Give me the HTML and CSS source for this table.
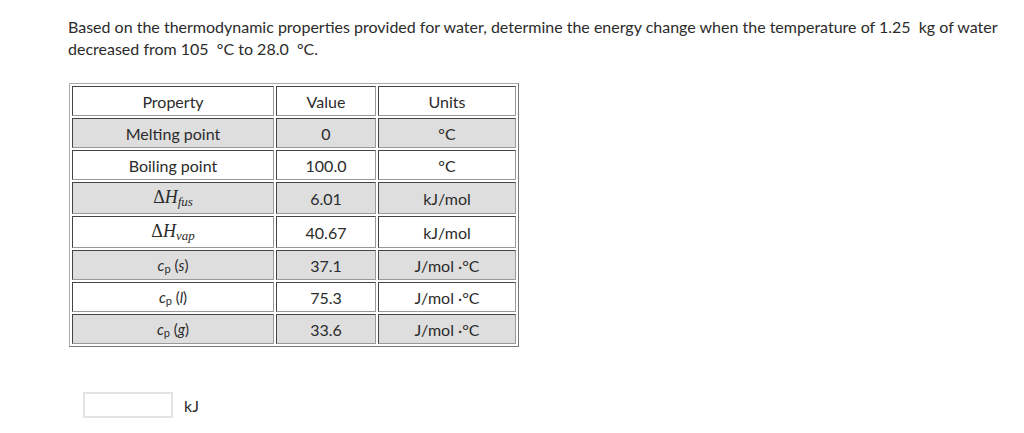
FILE: index.html
```html
<!DOCTYPE html>
<html>
<head>
<meta charset="utf-8">
<link rel="stylesheet" href="styles.css">
</head>
<body>
<div class="page">
  <p class="question">Based on the thermodynamic properties provided for water, determine the energy change when the temperature of 1.25&nbsp; kg of water decreased from 105&nbsp; °C to 28.0&nbsp; °C.</p>
  <table class="props">
    <tr><td class="c1">Property</td><td class="c2">Value</td><td class="c3">Units</td></tr>
    <tr class="alt"><td>Melting point</td><td>0</td><td>°C</td></tr>
    <tr><td>Boiling point</td><td>100.0</td><td>°C</td></tr>
    <tr class="alt tall"><td><span class="math">Δ<i>H</i><sub><i>fus</i></sub></span></td><td>6.01</td><td>kJ/mol</td></tr>
    <tr class="tall"><td><span class="math">Δ<i>H</i><sub><i>vap</i></sub></span></td><td>40.67</td><td>kJ/mol</td></tr>
    <tr class="alt"><td><span class="cp"><i>c</i><sub>p</sub> (<i>s</i>)</span></td><td>37.1</td><td>J/mol ·°C</td></tr>
    <tr><td><span class="cp"><i>c</i><sub>p</sub> (<i>l</i>)</span></td><td>75.3</td><td>J/mol ·°C</td></tr>
    <tr class="alt"><td><span class="cp"><i>c</i><sub>p</sub> (<i>g</i>)</span></td><td>33.6</td><td>J/mol ·°C</td></tr>
  </table>
  <div class="answer">
    <span class="box"></span>
    <span class="unit">kJ</span>
  </div>
</div>
</body>
</html>
```
FILE: styles.css
```css
html, body {
  margin: 0;
  padding: 0;
  background: #fff;
}
body {
  font-family: Lato, "Open Sans", sans-serif;
  color: #2b2b2b;
  font-size: 16px;
}
.page {
  padding: 16px 0 0 68px;
}
.question {
  margin: 0;
  width: 940px;
  line-height: 22px;
}
.props {
  margin-top: 23px;
  width: 450px;
  border-collapse: separate;
  border-spacing: 2px;
  border: 1px solid #888;
  border-color: #aaa #777 #777 #aaa;
  margin-left: 1px;
}
.props td {
  border: 1px solid #555;
  border-color: #444 #999 #999 #444;
  text-align: center;
  height: 28px;
  padding: 0;
  font-size: 16px;
}
.props .c1 { width: 200px; }
.props .c2 { width: 98px; }
.props tr.tall td { height: 30px; }
.props tr.alt td { background: #dedede; }
.math {
  font-family: "Liberation Serif", serif;
  font-size: 18px;
}
.math sub {
  font-size: 13px;
  vertical-align: -3px;
}
.cp {
  font-size: 15px;
}
.cp sub {
  font-size: 11px;
  vertical-align: -2px;
}
.answer {
  margin-top: 45px;
  margin-left: 15px;
  display: flex;
  align-items: center;
  gap: 11px;
}
.box {
  display: inline-block;
  width: 86px;
  height: 22px;
  border: 2px solid #e2e2e2;
  background: #fff;
}
.unit {
  font-size: 16px;
}
```
